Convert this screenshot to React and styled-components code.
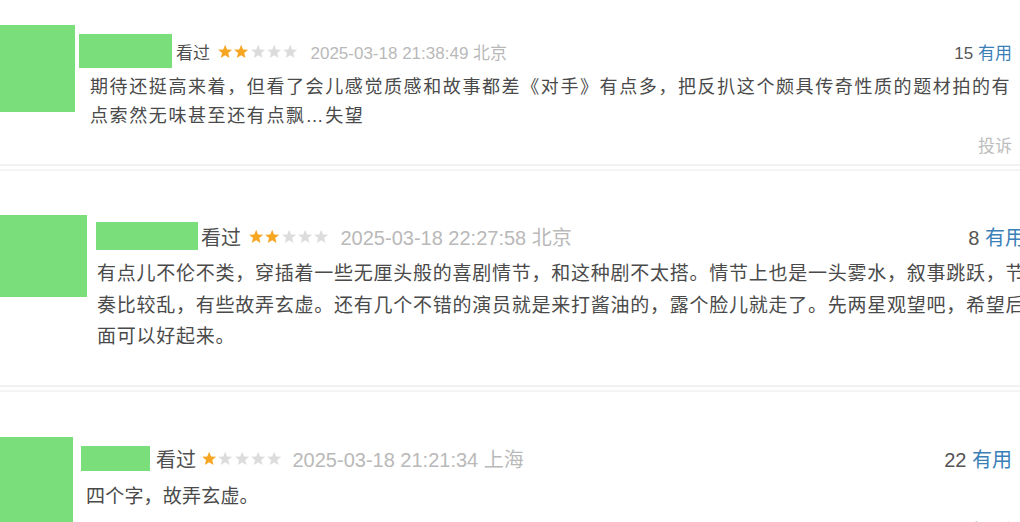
import React from "react";
import styled, { createGlobalStyle } from "styled-components";

const GlobalStyle = createGlobalStyle`
  html, body {
    margin: 0;
    padding: 0;
    background: #fff;
  }
  body {
    font-family: "Liberation Sans", "Noto Sans CJK SC", sans-serif;
    overflow: hidden;
  }
`;

const reviews = [
  {
    id: 1,
    stars: 2,
    time: "2025-03-18 21:38:49",
    place: "北京",
    votes: 15,
    report: true,
    lines: [
      "期待还挺高来着，但看了会儿感觉质感和故事都差《对手》有点多，把反扒这个颇具传奇性质的题材拍的有",
      "点索然无味甚至还有点飘…失望",
    ],
    look: {
      height: 164, top: 25, right: 8,
      avatarW: 75, avatarH: 87, gap: 4,
      headTop: 9, headH: 34, nameW: 93,
      meta: 17, statusGap: 4, starsGap: 7, dateGap: 12,
      text: 18, spacing: 1.6, lh: 29, indent: 11, textTop: 5,
      reportTop: 1,
    },
  },
  {
    id: 2,
    stars: 2,
    time: "2025-03-18 22:27:58",
    place: "北京",
    votes: 8,
    report: false,
    lines: [
      "有点儿不伦不类，穿插着一些无厘头般的喜剧情节，和这种剧不太搭。情节上也是一头雾水，叙事跳跃，节",
      "奏比较乱，有些故弄玄虚。还有几个不错的演员就是来打酱油的，露个脸儿就走了。先两星观望吧，希望后",
      "面可以好起来。",
    ],
    look: {
      height: 214, top: 44, right: -5,
      avatarW: 87, avatarH: 82, gap: 9,
      headTop: 7, headH: 28, nameW: 102,
      meta: 20, statusGap: 3, starsGap: 7, dateGap: 11,
      text: 19, spacing: 0.75, lh: 31.5, indent: 1, textTop: 8,
      reportTop: 0,
    },
  },
  {
    id: 3,
    stars: 1,
    time: "2025-03-18 21:21:34",
    place: "上海",
    votes: 22,
    report: true,
    lines: ["四个字，故弄玄虚。"],
    look: {
      height: 130, top: 45, right: 8,
      avatarW: 73, avatarH: 90, gap: 8,
      headTop: 9, headH: 25, nameW: 69,
      meta: 20, statusGap: 6, starsGap: 5, dateGap: 10,
      text: 19, spacing: 0.2, lh: 30, indent: 5, textTop: 11,
      reportTop: 4,
    },
  },
];

const Page = styled.main`
  width: 1020px;
  height: 522px;
  overflow: hidden;
  background: #fff;
`;

const Divider = styled.div`
  height: 7px;
  box-sizing: border-box;
  border-top: 2px solid #f1f1f1;
  border-bottom: 2px solid #f4f4f4;
`;

const Card = styled.article`
  display: flex;
  align-items: flex-start;
  box-sizing: border-box;
  height: ${(p) => p.$l.height}px;
  padding-top: ${(p) => p.$l.top}px;
  width: calc(100% + ${(p) => Math.max(0, -p.$l.right)}px);
  padding-right: ${(p) => Math.max(0, p.$l.right)}px;
  overflow: hidden;
`;

const Avatar = styled.div`
  flex-shrink: 0;
  width: ${(p) => p.$l.avatarW}px;
  height: ${(p) => p.$l.avatarH}px;
  background: #7ade7a;
`;

const Main = styled.div`
  flex: 1;
  min-width: 0;
  margin-left: ${(p) => p.$l.gap}px;
  padding-top: ${(p) => p.$l.headTop}px;
`;

const Header = styled.div`
  display: flex;
  align-items: center;
  height: ${(p) => p.$l.headH}px;
  font-size: ${(p) => p.$l.meta}px;
  white-space: nowrap;
`;

const NameBlock = styled.div`
  align-self: stretch;
  width: ${(p) => p.$l.nameW}px;
  background: #7ade7a;
`;

const Status = styled.span`
  margin-left: ${(p) => p.$l.statusGap}px;
  color: #4f4f4f;
`;

const StarRow = styled.span`
  display: flex;
  margin-left: ${(p) => p.$l.starsGap}px;
`;

const Time = styled.span`
  margin-left: ${(p) => p.$l.dateGap}px;
  color: #b9b9b9;
`;

const Votes = styled.span`
  margin-left: auto;
  color: #555;
`;

const Useful = styled.span`
  color: #3b7fb8;
  margin-left: 0.28em;
`;

const Body = styled.div`
  margin-top: ${(p) => p.$l.textTop}px;
  padding-left: ${(p) => p.$l.indent}px;
  font-size: ${(p) => p.$l.text}px;
  letter-spacing: ${(p) => p.$l.spacing}px;
  line-height: ${(p) => p.$l.lh}px;
  color: #4a4a4a;
`;

const Line = styled.div`
  white-space: nowrap;
`;

const Report = styled.div`
  margin-top: ${(p) => p.$l.reportTop}px;
  text-align: right;
  font-size: ${(p) => p.$l.meta}px;
  color: #bdbdbd;
`;

const Star = ({ on }) => (
  <svg width="16.3" height="15" viewBox="0 0 24 23">
    <polygon
      points="12,1 14.9,8.3 22.8,8.8 16.7,13.8 18.7,21.5 12,17.2 5.3,21.5 7.3,13.8 1.2,8.8 9.1,8.3"
      fill={on ? "#f7a623" : "#dcdcdc"}
    />
  </svg>
);

const Review = ({ r }) => (
  <Card $l={r.look}>
    <Avatar $l={r.look} />
    <Main $l={r.look}>
      <Header $l={r.look}>
        <NameBlock $l={r.look} />
        <Status $l={r.look}>看过</Status>
        <StarRow $l={r.look}>
          {[1, 2, 3, 4, 5].map((n) => (
            <Star key={n} on={n <= r.stars} />
          ))}
        </StarRow>
        <Time $l={r.look}>
          {r.time} {r.place}
        </Time>
        <Votes>
          {r.votes}
          <Useful>有用</Useful>
        </Votes>
      </Header>
      <Body $l={r.look}>
        {r.lines.map((t) => (
          <Line key={t}>{t}</Line>
        ))}
      </Body>
      {r.report && <Report $l={r.look}>投诉</Report>}
    </Main>
  </Card>
);

export default function App() {
  return (
    <Page>
      <GlobalStyle />
      {reviews.map((r, i) => (
        <React.Fragment key={r.id}>
          {i > 0 && <Divider />}
          <Review r={r} />
        </React.Fragment>
      ))}
    </Page>
  );
}
